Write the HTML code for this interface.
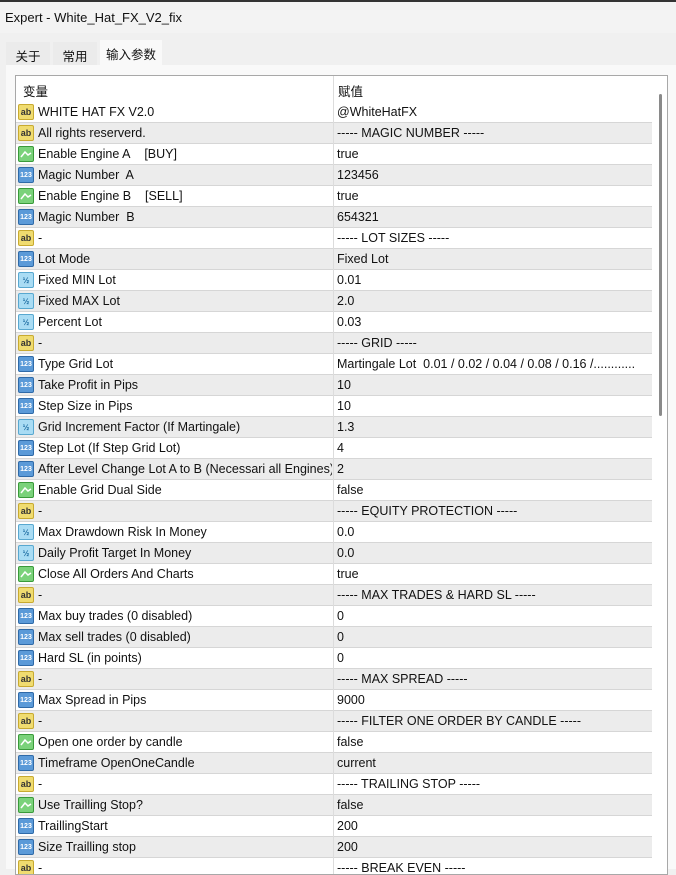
<!DOCTYPE html>
<html><head><meta charset="utf-8"><style>
*{margin:0;padding:0;box-sizing:border-box}
body{width:676px;height:869px;overflow:hidden;background:#f0f0f0;font-family:"Liberation Sans","Noto Sans CJK SC",sans-serif;font-size:12.5px;color:#111;position:relative}
.title{position:absolute;left:0;top:0;width:676px;height:33px;background:#f3f3f3;border-top:2px solid #333}
.title span{position:absolute;left:5px;top:8px;font-size:13px}
.tab{position:absolute;top:42px;height:23px;font-size:12.5px;padding-top:4px;text-align:center;background:#ebebeb}
.tab.a{top:40px;height:26px;background:#f9f9f9}
.panel{position:absolute;left:6px;top:65px;width:670px;height:804px;background:#f9f9f9}
.grid{position:absolute;left:15px;top:75px;width:653px;height:800px;border:1px solid #a8a8a8;background:#fff;overflow:hidden}
.hdr{position:absolute;left:0;top:0;width:636px;height:26px;background:#fff}
.hdr span{position:absolute;top:5px}
.row{position:absolute;left:0;width:636px;height:21px;border-bottom:1px solid #d6d6d6}
.row.g{background:#ececec}
.row .n{position:absolute;left:22px;top:3px;white-space:nowrap;width:294px;overflow:hidden}
.row .v{position:absolute;left:321px;top:3px;white-space:nowrap}
.sep{position:absolute;left:317px;top:0;width:1px;height:800px;background:#dcdcdc}
.ic{position:absolute;left:2px;top:2px;width:16px;height:16px;border-radius:2px;font-size:8px;font-weight:bold;text-align:center;line-height:15px;font-family:"Liberation Sans",sans-serif}
.ab{background:#f0dc70;border:1px solid #c8aa30;color:#333;font-size:9px}
.nm{background:#5b9ad8;border:1px solid #2f6aa8;color:#fff;font-size:7px}
.bo{background:#7ad27a;border:1px solid #3a9a3a}
.db{background:#a9dcf4;border:1px solid #58a8d0;color:#1a6aa0;font-size:8px}
.sb{position:absolute;left:643px;top:18px;width:3px;height:322px;background:#8a8a8a;border-radius:2px}
</style></head><body>
<div class="title"><span>Expert - White_Hat_FX_V2_fix</span></div>
<div class="panel"></div>
<div class="tab" style="left:6px;width:44px">关于</div>
<div class="tab" style="left:53px;width:44px">常用</div>
<div class="tab a" style="left:100px;width:62px">输入参数</div>
<div class="grid">
<div class="hdr"><span style="left:7px">变量</span><span style="left:322px">赋值</span></div>
<div id="rows"></div>
<div class="sep"></div>
<div class="sb"></div>
</div>
<script>
var d=[
["ab","WHITE HAT FX V2.0","@WhiteHatFX"],
["ab","All rights reserverd.","----- MAGIC NUMBER -----"],
["bo","Enable Engine A&nbsp;&nbsp;&nbsp; [BUY]","true"],
["nm","Magic Number&nbsp; A","123456"],
["bo","Enable Engine B&nbsp;&nbsp;&nbsp; [SELL]","true"],
["nm","Magic Number&nbsp; B","654321"],
["ab","-","----- LOT SIZES -----"],
["nm","Lot Mode","Fixed Lot"],
["db","Fixed MIN Lot","0.01"],
["db","Fixed MAX Lot","2.0"],
["db","Percent Lot","0.03"],
["ab","-","----- GRID -----"],
["nm","Type Grid Lot","Martingale Lot&nbsp; 0.01 / 0.02 / 0.04 / 0.08 / 0.16 /............"],
["nm","Take Profit in Pips","10"],
["nm","Step Size in Pips","10"],
["db","Grid Increment Factor (If Martingale)","1.3"],
["nm","Step Lot (If Step Grid Lot)","4"],
["nm","After Level Change Lot A to B (Necessari all Engines)","2"],
["bo","Enable Grid Dual Side","false"],
["ab","-","----- EQUITY PROTECTION -----"],
["db","Max Drawdown Risk In Money","0.0"],
["db","Daily Profit Target In Money","0.0"],
["bo","Close All Orders And Charts","true"],
["ab","-","----- MAX TRADES &amp; HARD SL -----"],
["nm","Max buy trades (0 disabled)","0"],
["nm","Max sell trades (0 disabled)","0"],
["nm","Hard SL (in points)","0"],
["ab","-","----- MAX SPREAD -----"],
["nm","Max Spread in Pips","9000"],
["ab","-","----- FILTER ONE ORDER BY CANDLE -----"],
["bo","Open one order by candle","false"],
["nm","Timeframe OpenOneCandle","current"],
["ab","-","----- TRAILING STOP -----"],
["bo","Use Trailling Stop?","false"],
["nm","TraillingStart","200"],
["nm","Size Trailling stop","200"],
["ab","-","----- BREAK EVEN -----"]];
var h="";
d.forEach(function(r,i){
var t=r[0]=="ab"?"ab":r[0]=="nm"?"123":r[0]=="db"?"½":"<svg width='14' height='14' viewBox='0 0 14 14'><path d='M2 10 L6 5 L9 8 L12 6' stroke='#fff' stroke-width='1.5' fill='none'/></svg>";
h+='<div class="row'+(i%2?' g':'')+'" style="top:'+(26+i*21)+'px"><div class="ic '+r[0]+'">'+t+'</div><span class="n">'+r[1]+'</span><span class="v">'+r[2]+'</span></div>';});
document.getElementById("rows").innerHTML=h;
</script>
</body></html>
